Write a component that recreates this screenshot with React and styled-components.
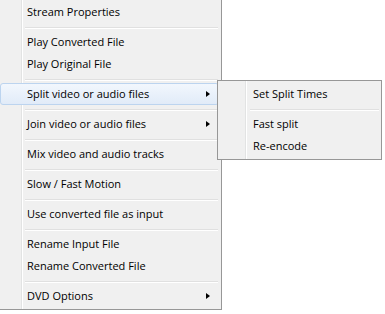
import styled, { createGlobalStyle } from "styled-components";

const Global = createGlobalStyle`
  html, body {
    margin: 0;
    padding: 0;
    background: #ffffff;
  }
  body {
    font-family: "Open Sans", "Noto Sans", "Liberation Sans", sans-serif;
    font-size: 11px;
    color: #000;
  }
`;

const Page = styled.div`
  width: 385px;
  height: 314px;
  overflow: hidden;
  display: flex;
  align-items: flex-start;
`;

const Wrap = styled.div`
  position: relative;
`;

const gutter = (x) => `linear-gradient(
    to right,
    transparent ${x}px,
    #e2e3e3 ${x}px,
    #e2e3e3 ${x + 1}px,
    #ffffff ${x + 1}px,
    #ffffff ${x + 2}px,
    transparent ${x + 2}px
  )`;

const Menu = styled.div`
  box-sizing: border-box;
  width: 222px;
  padding: 1px 0 2px 0;
  background: ${gutter(21)}, #f0f0f0;
  border-right: 1px solid #979797;
  border-bottom: 1px solid #979797;
`;

const SubMenu = styled.div`
  position: absolute;
  left: 217px;
  top: 80px;
  box-sizing: border-box;
  width: 165px;
  padding: 2px;
  background: ${gutter(27)}, #f0f0f0;
  border: 1px solid #979797;
`;

const Item = styled.div`
  box-sizing: border-box;
  height: 22px;
  margin-right: ${(p) => (p.$sub ? "0" : "2px")};
  padding-left: ${(p) => (p.$sub ? "33px" : "27px")};
  padding-right: 8px;
  display: flex;
  align-items: center;
  justify-content: space-between;
  white-space: nowrap;
  border: 1px solid transparent;
  border-radius: 3px;
  ${(p) =>
    p.$hot &&
    `
    background: linear-gradient(#f2f7fd, #e1ebf8);
    border-color: #bcd4ef;
  `}
`;

const Label = styled.span`
  margin-left: -1px;
  line-height: 20px;
`;

const Arrow = styled.span`
  width: 0;
  height: 0;
  border-top: 3.5px solid transparent;
  border-bottom: 3.5px solid transparent;
  border-left: 4px solid #000;
`;

const Separator = styled.div`
  height: 8px;
  margin-left: ${(p) => (p.$sub ? "30px" : "25px")};
  margin-right: ${(p) => (p.$sub ? "0" : "3px")};
  display: flex;
  flex-direction: column;
  justify-content: center;
  &::before {
    content: "";
    height: 1px;
    background: #e0e0e0;
    margin-top: 1px;
  }
  &::after {
    content: "";
    height: 1px;
    background: #ffffff;
  }
`;

const main = [
  { label: "Stream Properties" },
  "sep",
  { label: "Play Converted File" },
  { label: "Play Original File" },
  "sep",
  { label: "Split video or audio files", sub: true, hot: true },
  "sep",
  { label: "Join video or audio files", sub: true },
  "sep",
  { label: "Mix video and audio tracks" },
  "sep",
  { label: "Slow / Fast Motion" },
  "sep",
  { label: "Use converted file as input" },
  "sep",
  { label: "Rename Input File" },
  { label: "Rename Converted File" },
  "sep",
  { label: "DVD Options", sub: true },
];

const split = [
  { label: "Set Split Times" },
  "sep",
  { label: "Fast split" },
  { label: "Re-encode" },
];

const renderItems = (items, isSub) =>
  items.map((it, i) =>
    it === "sep" ? (
      <Separator key={i} $sub={isSub} />
    ) : (
      <Item key={i} $sub={isSub} $hot={it.hot}>
        <Label>{it.label}</Label>
        {it.sub && <Arrow />}
      </Item>
    )
  );

export default function App() {
  return (
    <Page>
      <Global />
      <Wrap>
        <Menu>{renderItems(main, false)}</Menu>
        <SubMenu>{renderItems(split, true)}</SubMenu>
      </Wrap>
    </Page>
  );
}
